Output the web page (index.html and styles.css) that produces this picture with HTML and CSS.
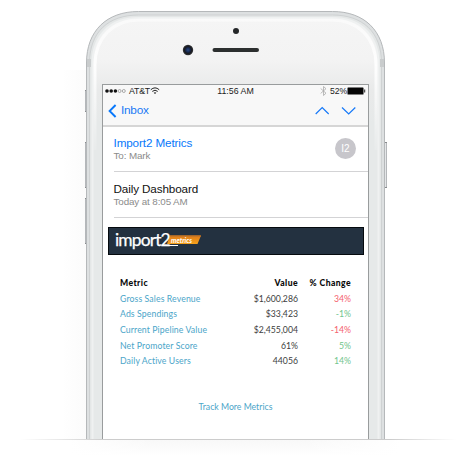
FILE: index.html
```
<!DOCTYPE html>
<html lang="en">
<head>
<meta charset="utf-8">
<title>Import2 Metrics</title>
<link rel="stylesheet" href="styles.css">
</head>
<body>
<div class="stage">
<svg class="device" width="461" height="456" viewBox="0 0 461 456" aria-hidden="true">
  <defs>
    <linearGradient id="line"><stop offset="0" stop-color="#ccc" stop-opacity="0"/><stop offset=".2" stop-color="#ccc"/><stop offset=".85" stop-color="#ccc"/><stop offset="1" stop-color="#ccc" stop-opacity="0"/></linearGradient>
    <linearGradient id="face" x1="0" y1="0" x2="0" y2="1"><stop offset="0" stop-color="#f5f5f5"/><stop offset=".1" stop-color="#f3f3f3"/><stop offset=".17" stop-color="#e9eaea"/><stop offset=".25" stop-color="#e6e9e9"/><stop offset="1" stop-color="#e6e9e9"/></linearGradient>
    <linearGradient id="shade" x1="0" y1="0" x2="0" y2="1"><stop offset="0" stop-color="#f8f8f8"/><stop offset="1" stop-color="#fff"/></linearGradient>
    <linearGradient id="shine" x1="0" y1="0" x2="0" y2="1"><stop offset="0" stop-color="#fff" stop-opacity=".5"/><stop offset=".35" stop-color="#fff" stop-opacity=".9"/><stop offset="1" stop-color="#fff" stop-opacity=".1"/></linearGradient>
    <radialGradient id="lens"><stop offset="0" stop-color="#284a83"/><stop offset=".45" stop-color="#17264a"/><stop offset=".65" stop-color="#17191e"/><stop offset="1" stop-color="#34363a"/></radialGradient>
    <linearGradient id="side"><stop offset="0" stop-color="#fff"/><stop offset="1" stop-color="#fbfbfb"/></linearGradient>
    <linearGradient id="fade"><stop offset="0" stop-color="#fff"/><stop offset=".25" stop-color="#fff" stop-opacity="0"/><stop offset=".7" stop-color="#fff" stop-opacity="0"/><stop offset="1" stop-color="#fff"/></linearGradient>
  </defs>
  <rect x="62" y="70" width="25" height="369" fill="url(#side)"/>
  <rect x="70" y="440" width="330" height="16" fill="url(#shade)"/>
  <rect x="70" y="440" width="331" height="16" fill="url(#fade)"/>
  <g fill="#e4e6e8">
    <rect x="85" y="90" width="3" height="22" rx="1"/>
    <rect x="85" y="142" width="3" height="46" rx="1"/>
    <rect x="85" y="198" width="3" height="46" rx="1"/>
    <rect x="384" y="142" width="3" height="46" rx="1"/>
  </g>
  <path d="M85.500 90v22M85.500 143v44M85.500 199v44M386.500 143v44" stroke="#b4b7ba"/>
  <path d="M85 90.500h2M85 111.500h2M85 142.500h2M85 187.500h2M85 198.500h2M85 243.500h2M384 142.500h3M384 187.500h3" stroke="#888b8e"/>
  <path d="M86.500 439V63c0-32 20-51.500 52-51.500h194c32 0 52 19.500 52 51.500v376" fill="#dde0e1" stroke="#b5b8ba"/>
  <path d="M89.500 439V63c0-31 19-48 49-48h194c30 0 49 17 49 48v376" fill="#e4e7e7" stroke="#cfd2d3"/>
  <path d="M92.500 439V64c0-29 18-46 46-46h194c28 0 46 17 46 46v375" fill="url(#face)" stroke="#eff1f1" stroke-width="2"/>
  <path d="M95 150V65c0-27 18-45 44-45h193c26 0 44 18 44 45v85" fill="none" stroke="url(#shine)" stroke-width="3"/>
  <path d="M87 59h4v8h-4zM380 59h4v8h-4z" fill="#c9cccd"/>
  <circle cx="188" cy="50" r="5.200" fill="url(#lens)"/>
  <circle cx="236" cy="31" r="3" fill="#242628"/>
  <rect x="212.500" y="48" width="46.500" height="4" rx="2" fill="#2c2f2f"/>
  <rect x="20" y="439" width="436" height="1" fill="url(#line)"/>
</svg>

<main class="screen">
  <header class="statusbar">
    <span class="carrier">
      <svg width="21" height="6" viewBox="0 0 21 6"><g fill="#111"><circle cx="2" cy="3" r="1.800"/><circle cx="6.200" cy="3" r="1.800"/><circle cx="10.400" cy="3" r="1.800"/></g><g fill="none" stroke="#777" stroke-width=".6"><circle cx="14.600" cy="3" r="1.500"/><circle cx="18.800" cy="3" r="1.500"/></g></svg>
      <span class="att">AT&amp;T</span>
      <svg width="10" height="8" viewBox="0 0 10 8" fill="none" stroke="#222" stroke-width="1"><path d="M.8 2.700Q5-1 9.200 2.700M2.300 4.400Q5 2 7.700 4.400"/><path d="M3.700 5.700 5 7.100l1.300-1.400Q5 4.700 3.700 5.700z" fill="#222" stroke="none"/></svg>
    </span>
    <span class="time">11:56 AM</span>
    <span class="power">
      <svg width="7" height="10" viewBox="0 0 7 10" fill="none" stroke="#aaa" stroke-width=".8"><path d="M.7 2.500 6 7.200 3.500 9.500v-9L6 2.700.7 7.400"/></svg>
      <span class="percent">52%</span>
      <svg width="19" height="8" viewBox="0 0 19 8"><rect x=".5" y=".5" width="16" height="7" rx=".6" fill="#050505"/><path d="M17.200 2.500h1v3h-1z" fill="#222"/></svg>
    </span>
  </header>
  <nav class="navbar">
    <svg width="9" height="14" viewBox="0 0 9 14" fill="none" stroke="#0878fb" stroke-width="1.900"><path d="M7.600 1 1.600 7l6 6"/></svg>
    <span class="inbox">Inbox</span>
    <svg class="arrows" width="41" height="9" viewBox="0 0 41 9" fill="none" stroke="#1679f8" stroke-width="1.200"><path d="M.7 8 7.200 1.500 13.700 8M27 1.500 33.700 8l6.600-6.500"/></svg>
  </nav>
  <section class="message sender">
    <div><h1>Import2 Metrics</h1><p class="to">To: Mark</p></div>
    <span class="avatar">I2</span>
  </section>
  <section class="message subject">
    <div><h2>Daily Dashboard</h2><p class="date">Today at 8:05 AM</p></div>
  </section>
  <div class="banner">
    <span class="logo">import2</span>
    <span class="tag"><svg width="34" height="10" viewBox="0 0 34 10" aria-hidden="true"><defs><linearGradient id="orange" x2="0" y2="1"><stop stop-color="#df7918"/><stop offset="1" stop-color="#f5a11b"/></linearGradient></defs><path d="M3 .5h31L30.500 9H0z" fill="url(#orange)"/><path d="M3 .5h31l-.7 1.500H2.500z" fill="#c97824"/></svg><span class="tagtext">metrics</span></span>
    <span class="stroke"></span>
  </div>
  <table class="metrics">
    <colgroup><col class="name"><col class="value"><col class="change"></colgroup>
    <thead><tr><th>Metric</th><th>Value</th><th>% Change</th></tr></thead>
    <tbody>
      <tr><td>Gross Sales Revenue</td><td>$1,600,286</td><td class="bad">34%</td></tr>
      <tr><td>Ads Spendings</td><td>$33,423</td><td class="good">-1%</td></tr>
      <tr><td>Current Pipeline Value</td><td>$2,455,004</td><td class="bad">-14%</td></tr>
      <tr><td>Net Promoter Score</td><td>61%</td><td class="good">5%</td></tr>
      <tr><td>Daily Active Users</td><td>44056</td><td class="good">14%</td></tr>
    </tbody>
  </table>
  <p class="more">Track More Metrics</p>
</main>
</div>
</body>
</html>
```
FILE: styles.css
```
* { box-sizing: border-box; }
body { margin: 0; background: #fff; }
h1, h2, p { margin: 0; font-weight: 400; }
svg { display: block; flex: none; }
.stage { position: relative; width: 461px; height: 456px; padding: 84px 0 0 102px; overflow: hidden; font-family: "Liberation Sans", Arial, sans-serif; }
.device { position: absolute; inset: 0; }
.screen { position: relative; width: 267px; height: 355px; background: #fff; border: 1px solid #999c9d; border-bottom: 0; }
.statusbar { display: grid; grid-template-columns: 1fr auto 1fr; align-items: center; height: 12px; padding: 0 2px; background: #f8f8f8; font-size: 8.6px; line-height: 12px; color: #222; }
.carrier { display: flex; align-items: center; }
.att { margin: 0 0 0 3px; font-size: 8.8px; letter-spacing: -.2px; }
.time { font-size: 8.8px; letter-spacing: 0; }
.power { display: flex; align-items: center; justify-content: flex-end; }
.percent { margin-left: 3px; letter-spacing: -.1px; }
.navbar { display: flex; align-items: center; height: 30px; padding: 0 12px 1px 5px; background: #f8f8f8; border-bottom: 2px solid #d6d6d6; }
.inbox { margin-left: 4px; color: #1879f5; font-size: 11.8px; line-height: 15px; letter-spacing: -.25px; }
.arrows { margin-left: auto; }
.message { display: flex; justify-content: space-between; margin-left: 10.500px; height: 45px; border-bottom: 1px solid #d3d3d5; }
.sender { padding: 8px 12px 0 0; }
.subject { height: 46px; padding-top: 9px; }
h1, h2 { font-size: 11.7px; line-height: 15px; letter-spacing: -.12px; }
h1 { color: #0878fb; }
h2 { color: #111; }
.to, .date { font-size: 9.8px; line-height: 12px; color: #8b8b8b; letter-spacing: -.1px; }
.avatar { width: 21px; height: 21px; margin-top: 3px; border-radius: 50%; background: #c7c6cb; color: #fff; font-size: 10px; line-height: 21px; text-align: center; }
.banner { display: flex; position: relative; width: 256px; height: 28px; margin: 9px 0 0 5px; padding-left: 6px; background: #233140; border: 1px solid #050a0e; }
.logo { position: relative; z-index: 1; color: #fff; font-family: Lato, sans-serif; font-size: 17.4px; line-height: 24px; letter-spacing: -.85px; width: 53px; -webkit-text-stroke: .25px #fff; }
.tag { position: relative; width: 34px; height: 10px; margin-top: 7px; margin-left: -1px; }
.tagtext { position: absolute; left: 4px; top: 0; color: #fff; font: italic 700 6.8px/10px Lato, sans-serif; }
.stroke { position: absolute; left: 54px; top: 17px; width: 15px; height: 1px; background: #fff; }
.metrics { width: 231px; margin: 20px 0 0 17px; border-collapse: collapse; table-layout: fixed; font-family: Lato, sans-serif; font-size: 8.7px; color: #3d3d3d; }
.name { width: 96px; }
.value { width: 82px; }
.change { width: 53px; }
.metrics th, .metrics td { height: 15.600px; padding: 0; line-height: 15px; text-align: right; white-space: nowrap; }
.metrics th { padding-top: 1px; line-height: 14.600px; color: #090909; font-weight: 900; font-size: 8.600px; letter-spacing: .42px; }
.metrics th:first-child, .metrics td:first-child { text-align: left; }
.metrics td:first-child { color: #4ba5c9; letter-spacing: .11px; }
.metrics .bad { color: #f45e6c; }
.metrics .good { color: #70c58c; }
.more { margin: 30px 0 0; color: #4ba5c9; font: 8.700px/16px Lato, sans-serif; text-align: center; }
```
